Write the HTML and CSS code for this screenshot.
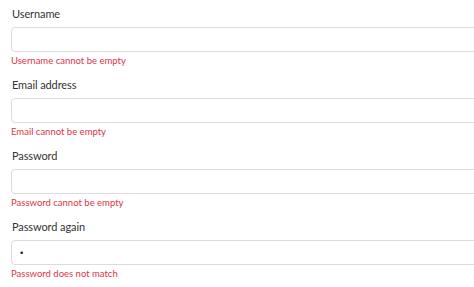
FILE: index.html
```html
<!DOCTYPE html>
<html>
<head>
<meta charset="utf-8">
<link rel="stylesheet" href="styles.css">
</head>
<body>
<form class="form">
  <div class="group">
    <label class="label">Username</label>
    <input class="input" type="text">
    <div class="error">Username cannot be empty</div>
  </div>
  <div class="group">
    <label class="label">Email address</label>
    <input class="input" type="text">
    <div class="error">Email cannot be empty</div>
  </div>
  <div class="group">
    <label class="label">Password</label>
    <input class="input" type="text">
    <div class="error">Password cannot be empty</div>
  </div>
  <div class="group">
    <label class="label">Password again</label>
    <input class="input dots" type="text" value="•">
    <div class="error">Password does not match</div>
  </div>
</form>
</body>
</html>
```
FILE: styles.css
```css
html, body {
  margin: 0;
  padding: 0;
  background: #fff;
  overflow: hidden;
}
body {
  font-family: Lato, "Open Sans", sans-serif;
  color: #333;
}
.form {
  padding: 5px 0 0 11px;
  width: 490px;
}
.group {
  display: flex;
  flex-direction: column;
  margin-bottom: 8px;
}
.label {
  font-size: 11px;
  line-height: 18px;
  letter-spacing: -0.1px;
  margin-bottom: 4px;
  padding-left: 1px;
}
.input {
  box-sizing: border-box;
  height: 25px;
  width: 100%;
  margin: 0;
  border: 1px solid #dcdcdc;
  border-radius: 4px;
  padding: 0 8px;
  font-family: inherit;
  font-size: 12px;
  color: #212529;
  background: #fff;
  outline: none;
}
.dots {
  font-family: "DejaVu Sans", sans-serif;
  font-size: 9px;
  padding-left: 7px;
}
.error {
  margin-top: 2px;
  font-size: 9.5px;
  line-height: 14px;
  color: #dc3545;
}
```
